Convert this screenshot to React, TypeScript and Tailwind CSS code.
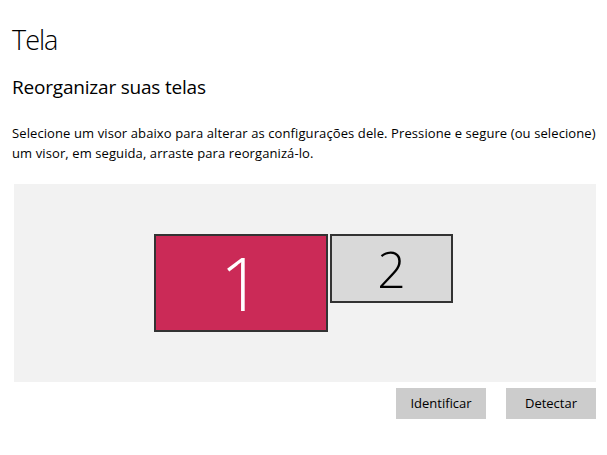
import React from "react";

const Monitor = ({ n, active, w, h, size }: { n: string; active?: boolean; w: string; h: string; size: string }) => (
  <div
    className={`${w} ${h} border-2 border-[#333333] flex items-center justify-center ${active ? "bg-[#cb2a57] text-white" : "bg-[#d9d9d9] text-black"}`}
  >
    <span className={`${size} font-light leading-none`}>{n}</span>
  </div>
);

const App = () => {
  return (
    <div className="w-[607px] h-[455px] bg-white text-black pl-3 pt-[22px] font-['Open_Sans','Noto_Sans',sans-serif]">
      <h1 className="text-[27px] leading-[36px] font-light tracking-[-1px]">Tela</h1>
      <h2 className="mt-[15px] text-[19px] leading-[28px] font-normal tracking-[-0.2px]">Reorganizar suas telas</h2>
      <p className="mt-[22px] text-[13px] leading-[20px] w-[594px] tracking-[0.1px]">
        Selecione um visor abaixo para alterar as configurações dele. Pressione e segure (ou selecione) um visor, em seguida, arraste para reorganizá-lo.
      </p>
      <div className="mt-[21px] ml-[2px] w-[582px]">
        <div className="h-[198px] bg-[#f2f2f2] pt-[50px] pl-[140px] flex items-start gap-[2px]">
          <Monitor n="1" active w="w-[174px]" h="h-[98px]" size="text-[74px]" />
          <Monitor n="2" w="w-[123px]" h="h-[69px]" size="text-[50px]" />
        </div>
        <div className="mt-[6px] flex justify-end gap-5">
          <button className="w-[90px] h-[31px] bg-[#cccccc] text-[13px]">Identificar</button>
          <button className="w-[90px] h-[31px] bg-[#cccccc] text-[13px]">Detectar</button>
        </div>
      </div>
    </div>
  );
};

export default App;
